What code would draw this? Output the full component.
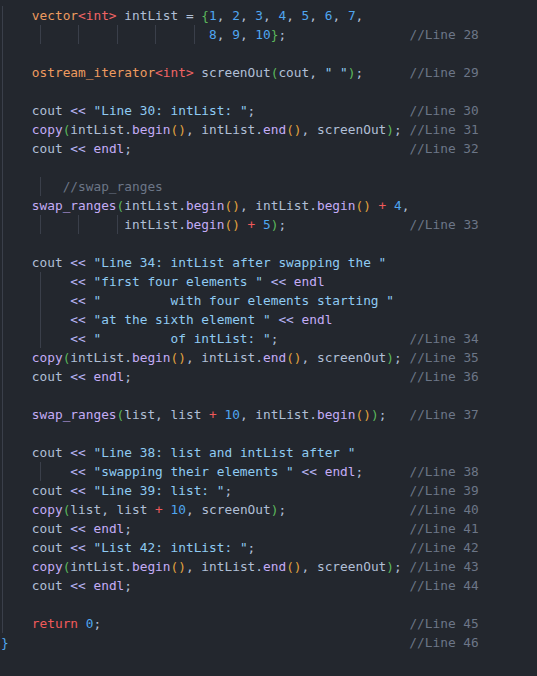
import React from "react";

// colour keys for the syntax tokens
const C = {
  d: "text-[#b0bfd6]",
  t: "text-[#ee9b5f]",
  k: "text-[#f06464]",
  n: "text-[#4fa6f0]",
  f: "text-[#c4acf6]",
  o: "text-[#b9b5f5]",
  s: "text-[#8fcbf3]",
  r: "text-[#f05a5a]",
  g: "text-[#5cb85c]",
  y: "text-[#e0a23e]",
  b: "text-[#4fa6f0]",
  c: "text-[#6c7687]",
};

const COMMENT_COL = 53;
const CH = 7.7;

const cout = [["    cout", "d"], [" ", "d"], ["<<", "o"], [" ", "d"]];
const copyIntList = [
  ["    copy", "f"], ["(", "g"], ["intList.", "d"], ["begin", "f"], ["()", "y"],
  [", intList.", "d"], ["end", "f"], ["()", "y"], [", screenOut", "d"], [")", "g"], [";", "d"],
];
const coutEndl = [...cout, ["endl", "f"], [";", "d"]];

const rows = [
  { code: [["    vector", "t"], ["<int>", "k"], [" intList = ", "d"], ["{", "g"], ["1", "n"], [", ", "d"], ["2", "n"], [", ", "d"], ["3", "n"], [", ", "d"], ["4", "n"], [", ", "d"], ["5", "n"], [", ", "d"], ["6", "n"], [", ", "d"], ["7", "n"], [",", "d"]] },
  { code: [["                           ", "d"], ["8", "n"], [", ", "d"], ["9", "n"], [", ", "d"], ["10", "n"], ["}", "g"], [";", "d"]], note: "28", guides: [5, 10, 15, 20, 25] },
  { code: [] },
  { code: [["    ostream_iterator", "t"], ["<int>", "k"], [" screenOut", "d"], ["(", "g"], ["cout, ", "d"], ['" "', "s"], [")", "g"], [";", "d"]], note: "29" },
  { code: [] },
  { code: [...cout, ['"Line 30: intList: "', "s"], [";", "d"]], note: "30" },
  { code: copyIntList, note: "31" },
  { code: coutEndl, note: "32" },
  { code: [] },
  { code: [["        //swap_ranges", "c"]], guides: [5] },
  { code: [["    swap_ranges", "f"], ["(", "g"], ["intList.", "d"], ["begin", "f"], ["()", "y"], [", intList.", "d"], ["begin", "f"], ["()", "y"], [" ", "d"], ["+", "r"], [" ", "d"], ["4", "n"], [",", "d"]] },
  { code: [["                intList.", "d"], ["begin", "f"], ["()", "y"], [" ", "d"], ["+", "r"], [" ", "d"], ["5", "n"], [")", "g"], [";", "d"]], note: "33", guides: [5, 10, 15] },
  { code: [] },
  { code: [...cout, ['"Line 34: intList after swapping the "', "s"]] },
  { code: [["         ", "d"], ["<<", "o"], [" ", "d"], ['"first four elements "', "s"], [" ", "d"], ["<<", "o"], [" ", "d"], ["endl", "f"]], guides: [5] },
  { code: [["         ", "d"], ["<<", "o"], [" ", "d"], ['"         with four elements starting "', "s"]], guides: [5] },
  { code: [["         ", "d"], ["<<", "o"], [" ", "d"], ['"at the sixth element "', "s"], [" ", "d"], ["<<", "o"], [" ", "d"], ["endl", "f"]], guides: [5] },
  { code: [["         ", "d"], ["<<", "o"], [" ", "d"], ['"         of intList: "', "s"], [";", "d"]], note: "34", guides: [5] },
  { code: copyIntList, note: "35" },
  { code: coutEndl, note: "36" },
  { code: [] },
  { code: [["    swap_ranges", "f"], ["(", "g"], ["list, list ", "d"], ["+", "r"], [" ", "d"], ["10", "n"], [", intList.", "d"], ["begin", "f"], ["()", "y"], [")", "g"], [";", "d"]], note: "37" },
  { code: [] },
  { code: [...cout, ['"Line 38: list and intList after "', "s"]] },
  { code: [["         ", "d"], ["<<", "o"], [" ", "d"], ['"swapping their elements "', "s"], [" ", "d"], ["<<", "o"], [" ", "d"], ["endl", "f"], [";", "d"]], note: "38", guides: [5] },
  { code: [...cout, ['"Line 39: list: "', "s"], [";", "d"]], note: "39" },
  { code: [["    copy", "f"], ["(", "g"], ["list, list ", "d"], ["+", "r"], [" ", "d"], ["10", "n"], [", screenOut", "d"], [")", "g"], [";", "d"]], note: "40" },
  { code: coutEndl, note: "41" },
  { code: [...cout, ['"List 42: intList: "', "s"], [";", "d"]], note: "42" },
  { code: copyIntList, note: "43" },
  { code: coutEndl, note: "44" },
  { code: [] },
  { code: [["    return", "r"], [" ", "d"], ["0", "n"], [";", "d"]], note: "45" },
  { code: [["}", "b"]], note: "46", last: true },
];

function Row({ row }) {
  const len = row.code.reduce((a, [t]) => a + t.length, 0);
  const pad = row.note ? " ".repeat(Math.max(1, COMMENT_COL - len)) : "";
  return (
    <div className="relative h-[19px] leading-[19px] whitespace-pre">
      {!row.last && <div className="absolute left-[1px] top-0 h-full w-px bg-[#3a3f4a]" />}
      {(row.guides || []).map((g) => (
        <div
          key={g}
          className="absolute top-0 h-full w-px bg-[#3a3f4a]"
          style={{ left: Math.round(1.2 + g * CH) - 1 }}
        />
      ))}
      <span className="relative">
        {row.code.map(([t, k], i) => (
          <span key={i} className={C[k]}>
            {t}
          </span>
        ))}
        {row.note && (
          <span className={C.c}>
            {pad}//Line {row.note}
          </span>
        )}
      </span>
    </div>
  );
}

export default function App() {
  return (
    <div className="min-h-screen w-full bg-[#23272e] pt-[6px] pl-[1px] font-['DejaVu_Sans_Mono',monospace] text-[12.8px]">
      {rows.map((row, i) => (
        <Row key={i} row={row} />
      ))}
    </div>
  );
}
